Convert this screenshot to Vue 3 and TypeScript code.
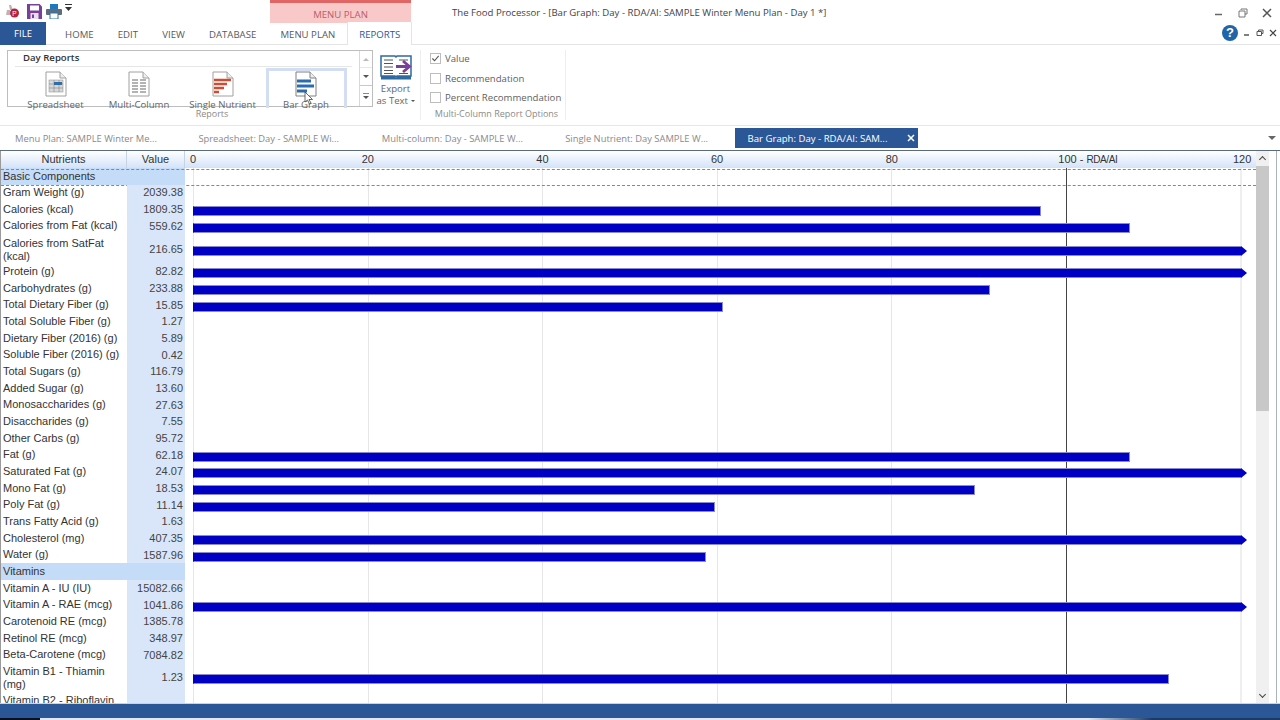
<script setup lang="ts">
type Row = {
    name: string;
    value?: string;
    pct?: number;
    tall?: boolean;
    section?: boolean;
};

const MAX_PCT = 120;

const menuTabs = ["HOME", "EDIT", "VIEW", "DATABASE", "MENU PLAN", "REPORTS"];

const docTabs = [
    "Menu Plan: SAMPLE Winter Me...",
    "Spreadsheet: Day - SAMPLE Wi...",
    "Multi-column: Day - SAMPLE W...",
    "Single Nutrient: Day SAMPLE W...",
];

const options = [
    { label: "Value", checked: true },
    { label: "Recommendation", checked: false },
    { label: "Percent Recommendation", checked: false },
];

const ticks = ["0", "20", "40", "60", "80"];

const rows: Row[] = [
    { name: "Basic Components", section: true },
    { name: "Gram Weight (g)", value: "2039.38" },
    { name: "Calories (kcal)", value: "1809.35", pct: 97.1 },
    { name: "Calories from Fat (kcal)", value: "559.62", pct: 107.3 },
    { name: "Calories from SatFat (kcal)", value: "216.65", pct: 130, tall: true },
    { name: "Protein (g)", value: "82.82", pct: 130 },
    { name: "Carbohydrates (g)", value: "233.88", pct: 91.3 },
    { name: "Total Dietary Fiber (g)", value: "15.85", pct: 60.7 },
    { name: "Total Soluble Fiber (g)", value: "1.27" },
    { name: "Dietary Fiber (2016) (g)", value: "5.89" },
    { name: "Soluble Fiber (2016) (g)", value: "0.42" },
    { name: "Total Sugars (g)", value: "116.79" },
    { name: "Added Sugar (g)", value: "13.60" },
    { name: "Monosaccharides (g)", value: "27.63" },
    { name: "Disaccharides (g)", value: "7.55" },
    { name: "Other Carbs (g)", value: "95.72" },
    { name: "Fat (g)", value: "62.18", pct: 107.3 },
    { name: "Saturated Fat (g)", value: "24.07", pct: 130 },
    { name: "Mono Fat (g)", value: "18.53", pct: 89.5 },
    { name: "Poly Fat (g)", value: "11.14", pct: 59.8 },
    { name: "Trans Fatty Acid (g)", value: "1.63" },
    { name: "Cholesterol (mg)", value: "407.35", pct: 130 },
    { name: "Water (g)", value: "1587.96", pct: 58.7 },
    { name: "Vitamins", section: true },
    { name: "Vitamin A - IU (IU)", value: "15082.66" },
    { name: "Vitamin A - RAE (mcg)", value: "1041.86", pct: 130 },
    { name: "Carotenoid RE (mcg)", value: "1385.78" },
    { name: "Retinol RE (mcg)", value: "348.97" },
    { name: "Beta-Carotene (mcg)", value: "7084.82" },
    { name: "Vitamin B1 - Thiamin (mg)", value: "1.23", pct: 111.8, tall: true },
    { name: "Vitamin B2 - Riboflavin (mg)", value: "", tall: true },
];

function barWidth(pct: number) {
    return `${(Math.min(pct, MAX_PCT) / MAX_PCT) * 100}%`;
}
</script>

<template>
    <div class="app">
        <header class="titlebar">
            <div class="qat">
                <svg class="qat-logo" viewBox="0 0 13 13" width="13" height="13">
                    <path d="M3 0 H5 L7 5 H1 L0 10 H5 Z" fill="#c4b0b0" />
                    <circle cx="8.500" cy="8" r="4.500" fill="#b3243c" />
                    <text x="8.500" y="10.500" text-anchor="middle" font-size="6.500" fill="#fff" font-family="Liberation Sans">P</text>
                </svg>
                <svg class="qat-save" viewBox="0 0 15 15" width="15" height="15">
                    <path d="M0 0 H12.500 L15 2.500 V15 H0 Z" fill="#7a3f98" />
                    <rect x="3" y="1.500" width="9" height="5" fill="#fff" />
                    <rect x="3.500" y="9" width="8" height="6" fill="#e9dff0" />
                    <rect x="5" y="10.500" width="2" height="3.500" fill="#7a3f98" />
                </svg>
                <svg class="qat-print" viewBox="0 0 16 15" width="16" height="15">
                    <rect x="4" y="0" width="8" height="5" fill="#1f78bd" />
                    <rect x="0" y="5" width="16" height="6" rx="1" fill="#5f6c7a" />
                    <rect x="4" y="9" width="8" height="6" fill="#fff" stroke="#2a72b5" />
                </svg>
                <svg class="qat-more" viewBox="0 0 8 8" width="8" height="8">
                    <rect x="0" y="0" width="7" height="1" fill="#333" />
                    <path d="M0 3 H7 L3.500 7 Z" fill="#333" />
                </svg>
            </div>
            <div class="context-tab">MENU PLAN</div>
            <div class="doc-title">The Food Processor - [Bar Graph: Day - RDA/AI: SAMPLE Winter Menu Plan - Day 1 *]</div>
            <div class="window-btns">
                <svg viewBox="0 0 10 10" width="10" height="10"><path d="M1 6.500 H8" stroke="#666" stroke-width="1.500" /></svg>
                <svg viewBox="0 0 10 10" width="10" height="10"><path d="M3 2 V1 H9 V6 H7 M1 3 H7 V9 H1 Z" stroke="#777" fill="none" /></svg>
                <svg viewBox="0 0 10 10" width="10" height="10"><path d="M1 1 L9 9 M9 1 L1 9" stroke="#555" stroke-width="1.500" /></svg>
            </div>
        </header>

        <nav class="menubar">
            <div class="file-tab">FILE</div>
            <div v-for="tab in menuTabs" :key="tab" class="menu-tab" :class="{ 'menu-tab--active': tab === 'REPORTS' }">
                {{ tab }}
            </div>
            <div class="menu-tools">
                <span class="help">?</span>
                <svg viewBox="0 0 8 8" width="8" height="8"><path d="M1 6 H6" stroke="#555" stroke-width="1.500" /></svg>
                <svg viewBox="0 0 8 8" width="8" height="8"><path d="M2.500 2 V1 H7 V4.500 H5.500 M1 2.500 H5.500 V6.500 H1 Z" stroke="#555" fill="none" /></svg>
                <svg viewBox="0 0 8 8" width="8" height="8"><path d="M1 1 L7 7 M7 1 L1 7" stroke="#444" stroke-width="1.200" /></svg>
            </div>
        </nav>

        <section class="ribbon">
            <div class="ribbon-group ribbon-group--reports">
                <div class="ribbon-tools">
                    <div class="gallery">
                        <div class="gallery-main">
                            <div class="gallery-title">Day Reports</div>
                            <div class="gallery-items">
                                <div class="gallery-item">
                                    <svg viewBox="0 0 22 26" width="22" height="26">
                                        <path d="M1 1 H15 L21 7 V25 H1 Z" fill="#fff" stroke="#a0a0a0" />
                                        <path d="M15 1 V7 H21" fill="#eee" stroke="#a0a0a0" />
                                        <rect x="4" y="9" width="14" height="12" fill="#d8d8d8" stroke="#888" stroke-width="0.500" />
                                        <path d="M4 13 H18 M4 17 H18 M9 9 V21 M14 9 V21" stroke="#888" stroke-width="0.600" />
                                        <rect x="9" y="11" width="8" height="3" fill="#2f6ca8" />
                                    </svg>
                                    <span>Spreadsheet</span>
                                </div>
                                <div class="gallery-item">
                                    <svg viewBox="0 0 22 26" width="22" height="26">
                                        <path d="M1 1 H15 L21 7 V25 H1 Z" fill="#fff" stroke="#a0a0a0" />
                                        <path d="M15 1 V7 H21" fill="#eee" stroke="#a0a0a0" />
                                        <path d="M4 9 H10 M12 9 H18 M4 12 H10 M12 12 H18 M4 15 H10 M12 15 H18 M4 18 H10 M12 18 H18 M4 21 H10 M12 21 H18" stroke="#9a9a9a" stroke-width="1.300" />
                                    </svg>
                                    <span>Multi-Column</span>
                                </div>
                                <div class="gallery-item">
                                    <svg viewBox="0 0 22 26" width="22" height="26">
                                        <path d="M1 1 H15 L21 7 V25 H1 Z" fill="#fff" stroke="#a0a0a0" />
                                        <path d="M15 1 V7 H21" fill="#eee" stroke="#a0a0a0" />
                                        <path d="M2 9 H19 M2 13 H15 M2 17 H12 M2 21 H7" stroke="#cf4b35" stroke-width="2.400" />
                                    </svg>
                                    <span>Single Nutrient</span>
                                </div>
                                <div class="gallery-item gallery-item--selected">
                                    <svg viewBox="0 0 22 26" width="22" height="26">
                                        <path d="M1 1 H15 L21 7 V25 H1 Z" fill="#fff" stroke="#808080" />
                                        <path d="M15 1 V7 H21" fill="#eee" stroke="#808080" />
                                        <path d="M2 10 H16 M2 15 H19 M2 20 H12" stroke="#2b6cb0" stroke-width="3" />
                                    </svg>
                                    <span>Bar Graph</span>
                                    <svg class="cursor" viewBox="0 0 10 14" width="10" height="14">
                                        <path d="M1 1 V11 L3.500 9 L5.500 13 L7 12 L5 8.500 H8.500 Z" fill="#fff" stroke="#444" stroke-width="0.800" />
                                    </svg>
                                </div>
                            </div>
                        </div>
                        <div class="gallery-scroll">
                            <div class="gallery-btn gallery-btn--up"><i class="arrow arrow--up"></i></div>
                            <div class="gallery-btn"><i class="arrow"></i></div>
                            <div class="gallery-btn gallery-btn--more"><b></b><i class="arrow"></i></div>
                        </div>
                    </div>
                    <div class="export">
                        <svg viewBox="0 0 32 26" width="32" height="26">
                            <path d="M1 2 H15 L16 3 L17 2 H31 V22 H17 L16 23 L15 22 H1 Z" fill="#fff" stroke="#2e6aa0" stroke-width="1.500" />
                            <path d="M1 22 H15 L16 24 L17 22 H31 V25.500 H1 Z" fill="#2e6aa0" />
                            <path d="M4 6 H13 M4 9.500 H13 M4 13 H13 M4 16.500 H13 M4 19.500 H13 M19 6 H28 M19 19.500 H28" stroke="#555" />
                            <path d="M16 12.500 H28 M23 7 L29.500 12.500 L23 18" stroke="#7a3f98" stroke-width="2.800" fill="none" />
                        </svg>
                        <span>Export</span>
                        <span>as Text <i class="caret"></i></span>
                    </div>
                </div>
                <div class="group-label">Reports</div>
            </div>

            <div class="ribbon-group ribbon-group--options">
                <div class="option-list">
                    <label v-for="opt in options" :key="opt.label" class="option">
                        <span class="checkbox">
                            <svg v-if="opt.checked" viewBox="0 0 10 10" width="9" height="9">
                                <path d="M1.500 5 L4 7.500 L8.500 2" stroke="#555" stroke-width="1.200" fill="none" />
                            </svg>
                        </span>
                        {{ opt.label }}
                    </label>
                </div>
                <div class="group-label">Multi-Column Report Options</div>
            </div>
        </section>

        <div class="doc-tabs">
            <div v-for="tab in docTabs" :key="tab" class="doc-tab">{{ tab }}</div>
            <div class="doc-tab doc-tab--active">
                <span>Bar Graph: Day - RDA/AI: SAM...</span>
                <svg viewBox="0 0 8 8" width="8" height="8"><path d="M1 1 L7 7 M7 1 L1 7" stroke="#fff" stroke-width="1.500" /></svg>
            </div>
            <i class="doc-tabs-more"></i>
        </div>

        <main class="report">
            <div class="report-table">
                <div class="report-head">
                    <div class="head-name">Nutrients</div>
                    <div class="head-value">Value</div>
                    <div class="head-axis">
                        <span v-for="tick in ticks" :key="tick" class="tick">{{ tick }}</span>
                        <span class="tick tick--rda">100 - <small>RDA/AI</small></span>
                        <span class="tick-end">120</span>
                    </div>
                </div>
                <div class="report-body">
                    <div class="gridlines">
                        <i></i><i></i><i></i><i></i><i></i><i class="gridline-rda"></i>
                    </div>
                    <div
                        v-for="(row, index) in rows"
                        :key="row.name"
                        class="row"
                        :class="{ 'row--tall': row.tall, 'row--section': row.section, 'row--focus': index === 0 }"
                    >
                        <div class="cell-name">{{ row.name }}</div>
                        <div class="cell-value">{{ row.value }}</div>
                        <div class="cell-bar">
                            <div
                                v-if="row.pct"
                                class="bar"
                                :class="{ 'bar--over': row.pct > MAX_PCT }"
                                :style="{ width: barWidth(row.pct) }"
                            ></div>
                        </div>
                    </div>
                </div>
            </div>
            <div class="scrollbar">
                <div class="scroll-btn"><i class="chevron chevron--up"></i></div>
                <div class="scroll-thumb"></div>
                <div class="scroll-track"></div>
                <div class="scroll-btn"><i class="chevron"></i></div>
            </div>
            <div class="report-edge"></div>
        </main>

        <footer class="statusbar"></footer>
        <div class="bottom-strip"><i></i></div>
    </div>
</template>

<style scoped>
.app {
    width: 1280px;
    height: 720px;
    overflow: hidden;
    display: flex;
    flex-direction: column;
    background: #fff;
    font-family: "Open Sans", "Liberation Sans", sans-serif;
    font-size: 9.600px;
    color: #555;
}

.titlebar {
    height: 22px;
    display: flex;
    flex: none;
}

.qat {
    width: 270px;
    display: flex;
    align-items: center;
    padding-left: 6px;
    box-sizing: border-box;
}

.qat-save {
    margin-left: 8px;
}

.qat-print {
    margin-left: 4px;
}

.qat-more {
    margin-left: 3px;
    margin-bottom: 6px;
}

.context-tab {
    width: 141px;
    height: 23px;
    box-sizing: border-box;
    background: #f9c9c9;
    border-top: 3px solid #e06666;
    color: #b5606a;
    text-align: center;
    line-height: 23px;
}

.doc-title {
    margin-left: 41px;
    padding-top: 6px;
    color: #444;
    white-space: nowrap;
}

.window-btns {
    margin-left: auto;
    display: flex;
    gap: 14px;
    padding: 8px 8px 0 0;
}

.menubar {
    height: 23px;
    display: flex;
    align-items: center;
    flex: none;
    border-bottom: 1px solid #e4e4e4;
    box-sizing: border-box;
}

.file-tab {
    width: 46px;
    height: 23px;
    margin-right: 7px;
    line-height: 23px;
    text-align: center;
    color: #fff;
    background: #2b5797;
    flex: none;
}

.menu-tab {
    padding: 0 12.100px;
    height: 23px;
    line-height: 25px;
    color: #5a5a5a;
    white-space: nowrap;
}

.menu-tab--active {
    position: relative;
    z-index: 1;
    padding: 0 11px;
    color: #2b5797;
    background: #fff;
    border: 1px solid #e4e4e4;
    border-width: 0 1px;
}

.menu-tools {
    margin-left: auto;
    display: flex;
    align-items: center;
    gap: 5px;
    padding-right: 3px;
}

.help {
    width: 16px;
    height: 16px;
    border-radius: 50%;
    background: #1f65a8;
    color: #fff;
    font-family: "Liberation Sans", sans-serif;
    font-size: 13px;
    font-weight: 700;
    line-height: 16px;
    text-align: center;
}

.ribbon {
    height: 81px;
    display: flex;
    flex: none;
    border-bottom: 1px solid #e6e6e6;
    box-sizing: border-box;
    padding-top: 5px;
}

.ribbon-group {
    display: flex;
    flex-direction: column;
    height: 70px;
    box-sizing: border-box;
    border-right: 1px solid #eee;
}

.ribbon-group--reports {
    width: 421px;
    padding-left: 7px;
}

.ribbon-tools {
    display: flex;
    height: 57px;
}

.group-label {
    text-align: center;
    color: #8a8a8a;
    font-size: 9px;
    line-height: 10px;
    margin-top: 2px;
    white-space: nowrap;
}

.ribbon-group--reports .group-label {
    width: 410px;
}

.gallery {
    width: 366px;
    box-sizing: border-box;
    border: 1px solid #bdbdbd;
    display: flex;
    flex: none;
}

.gallery-main {
    flex: 1;
    min-width: 0;
    padding: 0 7px;
}

.gallery-title {
    height: 15px;
    line-height: 14px;
    padding-left: 8px;
    font-weight: 600;
    color: #333;
    border-bottom: 1px solid #e6e6e6;
}

.gallery-items {
    display: flex;
    gap: 2.500px;
    padding-top: 1px;
}

.gallery-item {
    position: relative;
    width: 81px;
    height: 40px;
    flex: none;
    box-sizing: border-box;
    display: flex;
    flex-direction: column;
    align-items: center;
    border: 3px solid transparent;
    border-bottom: none;
    color: #666;
    white-space: nowrap;
}

.gallery-item > svg:first-child {
    flex: none;
}

.gallery-item span {
    line-height: 10px;
    margin-top: 2.500px;
}

.gallery-item--selected {
    border-color: #d3def2;
}

.cursor {
    position: absolute;
    left: 35px;
    top: 20px;
}

.gallery-scroll {
    width: 12px;
    flex: none;
    border-left: 1px solid #d8d8d8;
    display: flex;
    flex-direction: column;
}

.gallery-btn {
    height: 17px;
    border-bottom: 1px solid #c8c8c8;
    display: flex;
    flex-direction: column;
    align-items: center;
    justify-content: center;
    gap: 2px;
}

.gallery-btn--up {
    opacity: 0.4;
}

.gallery-btn--more {
    border-bottom: none;
    height: 21px;
}

.gallery-btn b {
    width: 6px;
    height: 1px;
    background: #888;
}

.arrow {
    width: 0;
    height: 0;
    border-left: 3px solid transparent;
    border-right: 3px solid transparent;
    border-top: 3px solid #555;
}

.arrow--up {
    border-top: none;
    border-bottom: 3px solid #555;
}

.export {
    width: 47px;
    margin-left: -1px;
    display: flex;
    flex-direction: column;
    align-items: center;
    color: #666;
    line-height: 11.500px;
    padding-top: 4px;
    white-space: nowrap;
}

.export svg {
    flex: none;
    margin-bottom: 3px;
}

.caret {
    display: inline-block;
    vertical-align: middle;
    border-left: 2px solid transparent;
    border-right: 2px solid transparent;
    border-top: 2px solid #555;
}

.ribbon-group--options {
    width: 145px;
    padding-left: 9px;
}

.option-list {
    display: flex;
    flex-direction: column;
    gap: 8px;
    height: 57px;
    padding-top: 3px;
    box-sizing: border-box;
}

.option {
    display: flex;
    align-items: center;
    gap: 4px;
    height: 11.500px;
    color: #5f5f5f;
    white-space: nowrap;
}

.ribbon-group--options .group-label {
    margin-left: -2px;
}

.checkbox {
    width: 11px;
    height: 11px;
    box-sizing: border-box;
    border: 1px solid #bdbdbd;
    display: flex;
    align-items: center;
    justify-content: center;
    flex: none;
}

.doc-tabs {
    height: 24px;
    display: flex;
    align-items: center;
    flex: none;
    box-sizing: border-box;
}

.doc-tab {
    width: 183.400px;
    box-sizing: border-box;
    padding-left: 15px;
    font-size: 9.400px;
    color: #8a8a8a;
    white-space: nowrap;
    flex: none;
}

.doc-tab--active {
    background: #2b5797;
    color: #fff;
    height: 20px;
    margin-left: 1px;
    padding-left: 13px;
    padding-right: 3px;
    font-size: 9.600px;
    display: flex;
    align-items: center;
    justify-content: space-between;
}

.doc-tabs-more {
    margin-left: auto;
    margin-right: 4px;
    border-left: 4px solid transparent;
    border-right: 4px solid transparent;
    border-top: 4px solid #666;
}

.report {
    height: 553px;
    flex: none;
    display: flex;
    border-top: 1px solid #5b6b7d;
    box-sizing: border-box;
    font-family: "Liberation Sans", Arial, sans-serif;
    font-size: 11px;
    color: #333;
}

.report-table {
    width: 1256px;
    flex: none;
    display: flex;
    flex-direction: column;
    box-sizing: border-box;
    border-left: 1px solid #9a9a9a;
    overflow: hidden;
}

.report-head {
    height: 17px;
    flex: none;
    display: flex;
    line-height: 17px;
    background: linear-gradient(#fff, #d3e3f8);
}

.head-name {
    width: 126px;
    flex: none;
    text-align: center;
    border-right: 1px solid #c5d3e5;
    box-sizing: border-box;
}

.head-value {
    width: 58px;
    flex: none;
    text-align: center;
    border-right: 1px solid #c5d3e5;
    box-sizing: border-box;
}

.head-axis {
    flex: 1;
    display: flex;
    padding-left: 8px;
}

.tick {
    width: 174.670px;
    flex: none;
    text-indent: -6px;
}

.tick:first-child {
    text-indent: -3px;
}

.tick--rda {
    text-indent: -8px;
    white-space: nowrap;
}

.tick--rda small {
    font-size: 10px;
    letter-spacing: -0.400px;
}

.tick-end {
    margin-left: -8px;
}

.report-body {
    position: relative;
    flex: 1;
    min-height: 0;
    overflow: hidden;
}

.gridlines {
    position: absolute;
    left: 192px;
    top: 0;
    bottom: 0;
    display: flex;
    width: 1049px;
    border-right: 2px solid #efefef;
    box-sizing: border-box;
}

.gridlines i {
    flex: 1;
    border-left: 1px solid #e6e6e6;
}

.gridline-rda {
    position: relative;
}

.gridline-rda::before {
    content: "";
    position: absolute;
    left: -1px;
    top: 0;
    bottom: 0;
    width: 1px;
    background: #444;
}

.row {
    position: relative;
    display: flex;
    height: 16.670px;
    line-height: 13px;
}

.row--tall {
    height: 29px;
}

.cell-name {
    width: 126px;
    flex: none;
    box-sizing: border-box;
    padding: 1.500px 2px 0;
}

.row--tall .cell-name {
    padding-top: 2px;
}

.cell-value {
    width: 58px;
    flex: none;
    box-sizing: border-box;
    background: #d9e6f9;
    padding-right: 2px;
    color: #444;
    display: flex;
    align-items: center;
    justify-content: flex-end;
}

.row--section .cell-name,
.row--section .cell-value {
    background: #c4dcf8;
}

.row--focus::after {
    content: "";
    position: absolute;
    left: 0;
    right: 0;
    top: 1px;
    bottom: -1px;
    border-top: 1px dashed #888;
    border-bottom: 1px dashed #888;
}

.cell-bar {
    width: 1048px;
    margin-left: 8px;
    flex: none;
    display: flex;
    align-items: center;
    padding-top: 3px;
    box-sizing: border-box;
}

.bar {
    position: relative;
    height: 10px;
    box-sizing: border-box;
    background: #0000c4;
    border: 1px solid #8a8ad0;
    border-left-color: #0000c4;
}

.bar--over {
    border-right: none;
}

.bar--over::after {
    content: "";
    position: absolute;
    right: -6px;
    top: -1px;
    border-left: 6px solid #0000c4;
    border-top: 5px solid transparent;
    border-bottom: 5px solid transparent;
}

.scrollbar {
    width: 13px;
    flex: none;
    display: flex;
    flex-direction: column;
    background: #f0f0f0;
}

.scroll-btn {
    height: 15px;
    flex: none;
    display: flex;
    align-items: center;
    justify-content: center;
}

.chevron {
    width: 5px;
    height: 5px;
    box-sizing: border-box;
    border-right: 1.500px solid #444;
    border-bottom: 1.500px solid #444;
    transform: translateY(-1px) rotate(45deg);
}

.chevron--up {
    transform: translateY(1px) rotate(225deg);
}

.scroll-thumb {
    height: 245px;
    flex: none;
    background: #c8c8c8;
}

.scroll-track {
    flex: 1;
}

.report-edge {
    width: 1px;
    margin-left: 7px;
    background: #aab3bd;
}

.statusbar {
    height: 15px;
    flex: none;
    background: #2b5797;
    border-top: 1px solid #c8d2e0;
    box-sizing: border-box;
}

.bottom-strip {
    flex: 1;
    background: linear-gradient(90deg, #dfe7f2 85%, #1d3a66 90%);
    display: flex;
}

.bottom-strip i {
    width: 40px;
    background: #0b1020;
}
</style>

<style>
html,
body {
    margin: 0;
    background: #fff;
}
</style>
